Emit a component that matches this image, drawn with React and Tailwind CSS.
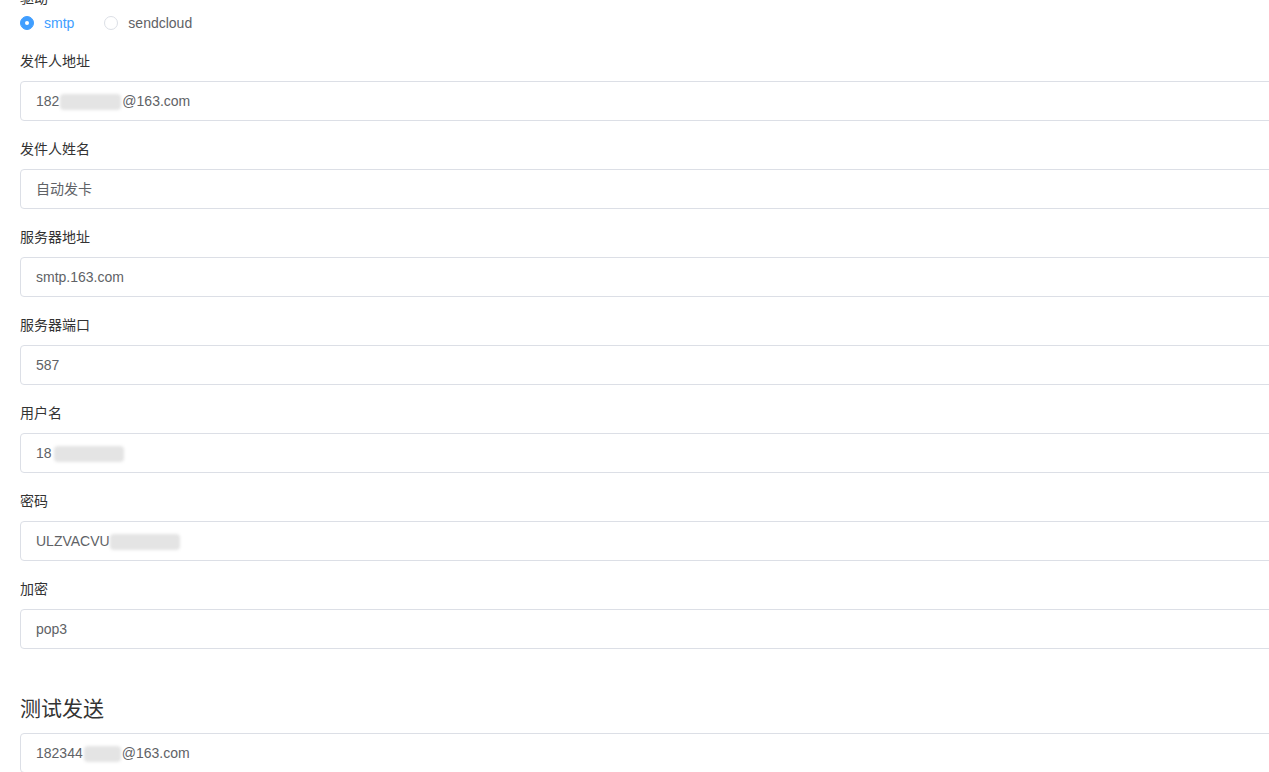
import React, { useState } from 'react';

const Blur = ({ w, className = '' }) => (
  <span
    className={`inline-block h-[16px] align-middle bg-[#e4e4e4] blur-[1.5px] rounded-sm ${className}`}
    style={{ width: w }}
  />
);

const fields = [
  { label: '发件人地址', value: <>182<Blur w={61} className="mx-[1px]" />@163.com</> },
  { label: '发件人姓名', value: '自动发卡' },
  { label: '服务器地址', value: 'smtp.163.com' },
  { label: '服务器端口', value: '587' },
  { label: '用户名', value: <>18<Blur w={70} className="ml-[2px]" /></> },
  { label: '密码', value: <>ULZVACVU<Blur w={70} /></> },
  { label: '加密', value: 'pop3' },
];

const Field = ({ label, children }) => (
  <div className="mb-[18px]">
    <div className="h-[20px] leading-[20px] text-[14px] text-[#333] mb-[10px]">{label}</div>
    <div className="w-[1300px] h-[40px] border border-[#dcdfe6] rounded-[4px] bg-white pl-[15px] flex items-center text-[14px] text-[#606266]">
      <span className="whitespace-nowrap">{children}</span>
    </div>
  </div>
);

const App = () => {
  const [driver, setDriver] = useState('smtp');

  return (
    <div
      className="w-[1269px] h-[772px] overflow-hidden bg-white"
      style={{ fontFamily: '"Liberation Sans", "Noto Sans CJK SC", sans-serif' }}
    >
      <div className="px-[20px] -mt-[12px]">
        {/* Driver */}
        <div className="h-[20px] leading-[20px] text-[14px] text-[#333] mb-[5px]">驱动</div>
        <div className="flex items-center h-[20px] mb-[18px] text-[14px]">
          {['smtp', 'sendcloud'].map((d) => (
            <label
              key={d}
              className="flex items-center mr-[30px] cursor-pointer"
              onClick={() => setDriver(d)}
            >
              {driver === d ? (
                <span className="w-[14px] h-[14px] rounded-full bg-[#409eff] border border-[#409eff] flex items-center justify-center">
                  <span className="w-[4px] h-[4px] rounded-full bg-white" />
                </span>
              ) : (
                <span className="w-[14px] h-[14px] rounded-full bg-white border border-[#dcdfe6]" />
              )}
              <span className={`ml-[10px] ${driver === d ? 'text-[#409eff]' : 'text-[#606266]'}`}>{d}</span>
            </label>
          ))}
        </div>

        {fields.map((f) => (
          <Field key={f.label} label={f.label}>{f.value}</Field>
        ))}

        <h3 className="mt-[45px] h-[30px] leading-[30px] text-[21px] text-[#333] font-normal mb-[9px]">测试发送</h3>
        <div className="w-[1300px] h-[40px] border border-[#dcdfe6] rounded-[4px] bg-white pl-[15px] flex items-center text-[14px] text-[#606266]">
          <span className="whitespace-nowrap">182344<Blur w={37} className="mx-[1px]" />@163.com</span>
        </div>
      </div>
    </div>
  );
};

export default App;
